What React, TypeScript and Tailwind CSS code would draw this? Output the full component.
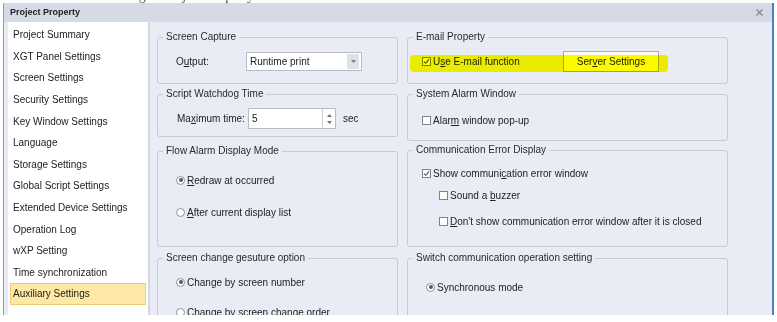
import type { ReactNode } from 'react';

const menuItems = [
  'Project Summary',
  'XGT Panel Settings',
  'Screen Settings',
  'Security Settings',
  'Key Window Settings',
  'Language',
  'Storage Settings',
  'Global Script Settings',
  'Extended Device Settings',
  'Operation Log',
  'wXP Setting',
  'Time synchronization',
  'Auxiliary Settings',
];

function Group({
  title,
  className = '',
  bodyClass = '',
  children,
}: {
  title: string;
  className?: string;
  bodyClass?: string;
  children?: ReactNode;
}) {
  return (
    <fieldset className={`border border-[#c6cad5] rounded-[3px] min-w-0 ${className}`}>
      <legend className="ml-[5px] px-[3px] leading-[14px] text-[#2a2a2a]">{title}</legend>
      <div className={bodyClass}>{children}</div>
    </fieldset>
  );
}

function Radio({ checked = false }: { checked?: boolean }) {
  return (
    <span className="w-[9px] h-[9px] rounded-full border border-[#8d929c] bg-white flex items-center justify-center shrink-0">
      {checked && <span className="w-[4px] h-[4px] rounded-full bg-[#555a63]" />}
    </span>
  );
}

function Check({ checked = false }: { checked?: boolean }) {
  return (
    <span className="w-[9px] h-[9px] border border-[#7e838c] bg-white flex items-center justify-center shrink-0">
      {checked && (
        <svg width="7" height="7" viewBox="0 0 7 7">
          <path d="M1 3.6 L2.8 5.3 L6 1.3" fill="none" stroke="#4b4b4b" strokeWidth="1.1" />
        </svg>
      )}
    </span>
  );
}

function Row({ children, className = '' }: { children: ReactNode; className?: string }) {
  return <div className={`flex items-center h-[14px] gap-[2px] ${className}`}>{children}</div>;
}

export default function App() {
  return (
    <div className="relative w-[777px] h-[322px] overflow-hidden bg-white font-['Liberation_Sans',Arial,sans-serif] text-[10px] text-[#222]">
      {/* cut-off caption from the document above */}
      <div className="h-[3px] overflow-hidden">
        <div className="-mt-[12px] pl-[15px] font-['Liberation_Serif',serif] text-[14px] leading-[15px] text-[#555] whitespace-nowrap">
          2. E-mail server setting at Project Property
        </div>
      </div>

      <div className="flex h-[312px]">
        <div className="w-[3px]" />
        <div className="w-[771px] flex flex-col bg-[#e9ecf5] border-l border-[#7d9dcb] border-r-2 border-r-[#4f7fbd]">
          {/* title bar */}
          <div className="h-[19px] shrink-0 bg-[#d5dae6] flex items-center justify-between pl-[6px] pr-[9px]">
            <span className="font-bold text-[9px] text-[#222]">Project Property</span>
            <svg width="7" height="7" viewBox="0 0 7 7">
              <path d="M0.5 0.5 L6.5 6.5 M6.5 0.5 L0.5 6.5" stroke="#80848c" strokeWidth="1.2" />
            </svg>
          </div>

          <div className="flex flex-1 min-h-0 pl-[4px] overflow-hidden">
            {/* left menu */}
            <div className="w-[142px] shrink-0 bg-white border-r-2 border-[#d3d7e1] pt-[2px]">
              {menuItems.map((item) => (
                <div
                  key={item}
                  className={`h-[21.6px] mx-[2px] pl-[2px] flex items-center border ${
                    item === 'Auxiliary Settings'
                      ? 'bg-[#fde9a5] border-[#efcc78]'
                      : 'border-transparent'
                  }`}
                >
                  {item}
                </div>
              ))}
            </div>

            {/* settings */}
            <div className="flex gap-[9px] pl-[7px] pt-[8px]">
              <div className="w-[241px] flex flex-col">
                <Group title="Screen Capture" bodyClass="h-[39px] pt-[8px] pl-[18px] flex items-start">
                  <span className="w-[70px] leading-[19px]">
                    O<u>u</u>tput:
                  </span>
                  <div className="w-[116px] h-[19px] bg-white border border-[#b8bcc6] flex items-center justify-between pl-[3px] pr-[2px]">
                    <span>Runtime print</span>
                    <span className="w-[12px] h-[15px] bg-[#dfe2ea] flex items-center justify-center">
                      <svg width="5" height="3" viewBox="0 0 5 3">
                        <path d="M0 0 L5 0 L2.5 3 Z" fill="#7a7e86" />
                      </svg>
                    </span>
                  </div>
                </Group>

                <Group title="Script Watchdog Time" className="mt-[3px]" bodyClass="h-[35px] pt-[7px] pl-[19px] flex items-start">
                  <span className="w-[71px] leading-[21px]">
                    Ma<u>x</u>imum time:
                  </span>
                  <div className="w-[88px] h-[21px] bg-white border border-[#b8bcc6] flex">
                    <span className="flex-1 pl-[3px] leading-[19px]">5</span>
                    <span className="w-[13px] border-l border-[#c9ccd4] flex flex-col items-center justify-center gap-[4px]">
                      <svg width="5" height="3" viewBox="0 0 5 3">
                        <path d="M0 3 L5 3 L2.5 0 Z" fill="#6f737b" />
                      </svg>
                      <svg width="5" height="3" viewBox="0 0 5 3">
                        <path d="M0 0 L5 0 L2.5 3 Z" fill="#6f737b" />
                      </svg>
                    </span>
                  </div>
                  <span className="ml-[7px] leading-[21px]">sec</span>
                </Group>

                <Group title="Flow Alarm Display Mode" className="mt-[7px]" bodyClass="h-[88px] pt-[15px] pl-[18px]">
                  <Row>
                    <Radio checked />
                    <span>
                      <u>R</u>edraw at occurred
                    </span>
                  </Row>
                  <Row className="mt-[18px]">
                    <Radio />
                    <span>
                      <u>A</u>fter current display list
                    </span>
                  </Row>
                </Group>

                <Group title="Screen change gesuture option" className="mt-[4px]" bodyClass="h-[90px] pt-[10px] pl-[18px]">
                  <Row>
                    <Radio checked />
                    <span>Change by screen number</span>
                  </Row>
                  <Row className="mt-[16px]">
                    <Radio />
                    <span>Change by screen change order</span>
                  </Row>
                </Group>
              </div>

              <div className="w-[321px] flex flex-col">
                <Group title="E-mail Property" bodyClass="h-[39px] pt-[7px] pl-[14px] flex items-start">
                  <div className="w-[141px] h-[21px] flex items-center gap-[2px]">
                    <Check checked />
                    <span>
                      U<u>s</u>e E-mail function
                    </span>
                  </div>
                  <div className="w-[96px] h-[21px] border border-[#a9abb0] bg-[#fdfaf0] flex items-center justify-center">
                    Ser<u>v</u>er Settings
                  </div>
                </Group>

                <Group title="System Alarm Window" className="mt-[3px]" bodyClass="h-[39px] pt-[12px] pl-[14px]">
                  <Row>
                    <Check />
                    <span>
                      Alar<u>m</u> window pop-up
                    </span>
                  </Row>
                </Group>

                <Group title="Communication Error Display" className="mt-[2px]" bodyClass="h-[89px] pt-[9px] pl-[14px]">
                  <Row>
                    <Check checked />
                    <span>
                      Show communi<u>c</u>ation error window
                    </span>
                  </Row>
                  <Row className="mt-[8px] pl-[17px]">
                    <Check />
                    <span>
                      Sound a <u>b</u>uzzer
                    </span>
                  </Row>
                  <Row className="mt-[12px] pl-[17px]">
                    <Check />
                    <span>
                      <u>D</u>on't show communication error window after it is closed
                    </span>
                  </Row>
                </Group>

                <Group title="Switch communication operation setting" className="mt-[4px]" bodyClass="h-[90px] pt-[15px] pl-[18px]">
                  <Row>
                    <Radio checked />
                    <span>Synchronous mode</span>
                  </Row>
                </Group>
              </div>
            </div>
          </div>
        </div>
        <div className="w-[3px] bg-white" />
      </div>

      {/* highlighter stroke */}
      <div className="absolute left-[410px] top-[55px] w-[258px] h-[17px] rounded-[4px] bg-[#ffff00] mix-blend-multiply" />
    </div>
  );
}
